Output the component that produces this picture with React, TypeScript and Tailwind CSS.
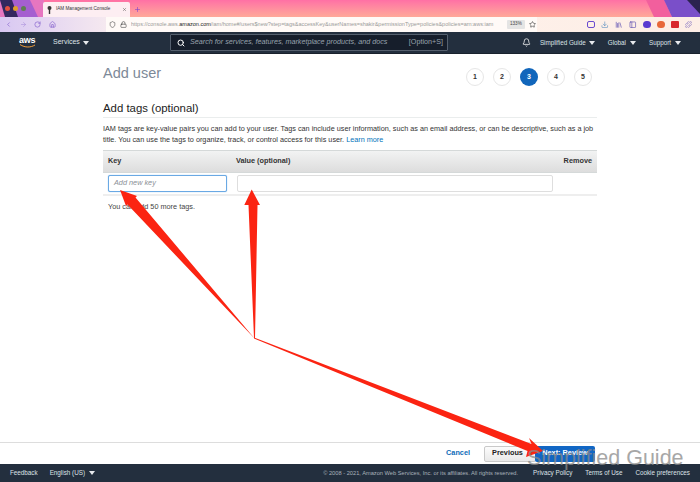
import { ChevronLeft } from "lucide-react";
import { ArrowRight, RotateCw, Home, Shield, Lock, Star, Search, Bell, X, Plus, Puzzle, Download, Library, PanelLeft } from "lucide-react";

const font = "font-['Liberation_Sans','Arial',sans-serif]";
const STEPS = [1, 2, 3, 4, 5];

function Caret({ className = "" }: { className?: string }) {
  return (
    <svg width="6" height="4" viewBox="0 0 6 4" className={className}>
      <path d="M0 0h6L3 4z" fill="#e8eaed" />
    </svg>
  );
}

function Chrome() {
  return (
    <div className="shrink-0">
      <div className="relative h-[17px] bg-gradient-to-b from-[#ff70a5] to-[#ffa898] flex items-end overflow-hidden">
        <svg className="absolute left-0 top-0" width="44" height="17" viewBox="0 0 44 17">
          <path d="M0 0h44v17H0z" fill="#e676c0" />
          <path d="M0 0h30l8 17H7z" fill="#a55fd0" />
          <path d="M0 0h12l6 17H5z" fill="#33285f" />
        </svg>
        <svg className="absolute right-0 top-0" width="54" height="17" viewBox="0 0 54 17">
          <path d="M0 0h18l8 17H8z" fill="#f25f9d" />
          <path d="M18 0h36v17H26z" fill="#7a4fc9" />
          <path d="M41 0h13v14z" fill="#2b2350" />
        </svg>
        <div className="absolute left-[5px] top-[6px] flex gap-[3px]">
          <span className="w-[5px] h-[5px] rounded-full bg-[#e2503f]" />
          <span className="w-[5px] h-[5px] rounded-full bg-[#e0a02c]" />
          <span className="w-[5px] h-[5px] rounded-full bg-[#5f7f52]" />
        </div>
        <div className="relative ml-[43px] h-[15px] w-[87px] bg-[#fdeef2] rounded-t-[2px] flex items-center pl-[4px] pr-[3px] gap-[4px]">
          <svg width="5" height="8" viewBox="0 0 5 8" className="shrink-0">
            <circle cx="2.5" cy="2" r="2" fill="#333" />
            <path d="M1.8 3h1.4v5H1.8z" fill="#333" />
          </svg>
          <span className="text-[4.6px] text-[#333] flex-1 whitespace-nowrap">IAM Management Console</span>
          <X size={5} className="text-[#444]" />
        </div>
        <Plus size={7} className="relative ml-[4px] mb-[4px] text-[#7b3fd0]" />
      </div>
      <div className="relative h-[15px] bg-gradient-to-r from-[#d8c8f2] via-[#fff3ee] via-[20%] to-[#fdeee6] flex items-center">
        <div className="flex items-center gap-[7.5px] pl-[5px] w-[106px] text-[#7b55c9]">
          <ChevronLeft size={7} />
          <ArrowRight size={7} className="opacity-50" />
          <RotateCw size={7} />
          <Home size={7} />
        </div>
        <div className="flex-none w-[431px] h-[15px] bg-[#fffaf7] flex items-center pl-[3px] gap-[4px]">
          <Shield size={7} className="text-[#444]" />
          <Lock size={7} className="text-[#444]" />
          <span className="text-[5.5px] text-[#9a9a9a] whitespace-nowrap w-[372px] overflow-hidden">
            https://console.aws.<span className="text-[#222]">amazon.com</span>/iam/home#/users$new?step=tags&accessKey&userNames=shakir&permissionType=policies&policies=arn:aws:iam
          </span>
          <span className="text-[4.6px] text-[#444] bg-[#e4e4e4] rounded-[1px] px-[3px] py-[1px]">133%</span>
          <Star size={7} className="text-[#333]" />
        </div>
        <div className="flex items-center gap-[6.5px] ml-[50px]">
          <span className="w-[7.5px] h-[7px] rounded-[2px] border border-[#6a4bd0]" />
          <Download size={7.5} className="text-[#5a8fc0]" />
          <Library size={7.5} className="text-[#5a4bb0]" />
          <PanelLeft size={7.5} className="text-[#5a4bb0]" />
          <span className="w-[7.5px] h-[7.5px] rounded-full bg-[#5a3bd0]" />
          <span className="w-[7.5px] h-[7.5px] rounded-full bg-[#e8683a]" />
          <span className="w-[7.5px] h-[7.5px] bg-[#d8282c] rounded-[1px]" />
          <Puzzle size={7} className="text-[#7a6bc0]" />
        </div>
      </div>
    </div>
  );
}

function AwsNav() {
  return (
    <div className="shrink-0 h-[22px] bg-[#232f3e] border-b border-[#19222d] flex items-center text-[#dfe3e8] text-[7px]">
      <div className="w-[53px] pl-[19px] flex flex-col items-start">
        <span className="text-[9px] leading-[7px] font-bold tracking-tight text-white">aws</span>
        <svg width="18" height="4" viewBox="0 0 18 4"><path d="M1 0.5c5 3.5 11 3 15 0.5" stroke="#f29d38" strokeWidth="1" fill="none" /></svg>
      </div>
      <div className="flex items-center gap-[3px] w-[117px]">
        <span>Services</span>
        <Caret />
      </div>
      <div className="w-[278px] h-[17px] bg-[#161e2b] border border-[#55606e] rounded-[1px] flex items-center pl-[6px] pr-[4px] gap-[5px] text-[7.2px]">
        <Search size={8} className="text-white shrink-0" strokeWidth={3} />
        <span className="italic text-[#99a3ad] flex-1 whitespace-nowrap">Search for services, features, marketplace products, and docs</span>
        <span className="text-[#99a3ad]">[Option+S]</span>
      </div>
      <div className="ml-auto flex items-center text-[6.3px]">
        <Bell size={9} className="text-white mr-[9px]" />
        <span className="mr-[3px]">Simplified Guide</span>
        <Caret className="mr-[13px]" />
        <span className="mr-[4px]">Global</span>
        <Caret className="mr-[13px]" />
        <span className="mr-[4px]">Support</span>
        <Caret className="mr-[19px]" />
      </div>
    </div>
  );
}

function Main() {
  return (
    <div className="flex-1 px-[103px] relative">
      <div className="flex items-start justify-between h-[47px]">
        <h1 className="text-[14.5px] leading-[18px] mt-[10px] text-[#7d8998]">Add user</h1>
        <div className="flex gap-[9px] mt-[14px] mr-[5px]">
          {STEPS.map((n) => (
            <span
              key={n}
              className={
                n === 3
                  ? "w-[18px] h-[18px] rounded-full bg-[#1166bb] text-white text-[7px] font-bold flex items-center justify-center"
                  : "w-[18px] h-[18px] rounded-full bg-white border border-[#e6e6e6] text-[#333] text-[7px] font-bold flex items-center justify-center"
              }
            >
              {n}
            </span>
          ))}
        </div>
      </div>
      <h2 className="text-[11.4px] leading-[15px] text-[#222] pb-[1px] border-b border-[#eaeded]">Add tags (optional)</h2>
      <p className="text-[7.27px] leading-[11px] text-[#333] mt-[5px] whitespace-nowrap">
        IAM tags are key-value pairs you can add to your user. Tags can include user information, such as an email address, or can be descriptive, such as a job
        <br />
        title. You can use the tags to organize, track, or control access for this user. <span className="text-[#0073bb]">Learn more</span>
      </p>
      <div className="mt-[5px] h-[23px] bg-gradient-to-b from-[#f2f3f3] to-[#dddddd] border-y border-[#d5d9d9] grid grid-cols-[128px_1fr_auto] items-center pl-[5px] pr-[5px] text-[7.3px] font-bold text-[#333]">
        <span>Key</span>
        <span>Value (optional)</span>
        <span>Remove</span>
      </div>
      <div className="h-[23px] border-b-[2px] border-[#eeeeee] grid grid-cols-[119px_316px] gap-x-[10px] items-center px-[5px]">
        <div className="h-[17px] rounded-[2px] border border-[#6aa9e4] bg-white flex items-center pl-[5px] text-[7.3px] italic text-[#8a8f96] shadow-[0_0_1px_#6aa9e4]">
          Add new key
        </div>
        <div className="h-[17px] rounded-[2px] border border-[#dedede] bg-white" />
      </div>
      <p className="text-[7.3px] text-[#444] mt-[6px] ml-[5px]">You can add 50 more tags.</p>
    </div>
  );
}

function ActionBar() {
  return (
    <div className="shrink-0 h-[22px] border-t border-[#dddddd] flex items-center justify-end pr-[105px] text-[7.3px] font-bold">
      <span className="text-[#0f6cb8] mr-[14px]">Cancel</span>
      <span className="h-[16px] w-[52px] bg-gradient-to-b from-[#fcfcfc] to-[#e9e9e9] border border-[#c9c9c9] rounded-[2px] flex items-center justify-center text-[#222] mr-[-1px] pr-[5px]">
        Previous
      </span>
      <span className="h-[16px] w-[60px] bg-[#1166c4] rounded-[2px] flex items-center justify-center text-white whitespace-nowrap">
        Next: Review
      </span>
    </div>
  );
}

function Footer() {
  return (
    <div className="shrink-0 h-[18px] bg-[#232f3e] flex items-center text-[6.3px] text-[#dfe3e8] pl-[10px] pr-[10px]">
      <span className="mr-[12px]">Feedback</span>
      <span className="mr-[4px]">English (US)</span>
      <Caret />
      <span className="ml-auto text-[#a9b2bb] text-[5.7px] mr-[15px]">© 2008 - 2021, Amazon Web Services, Inc. or its affiliates. All rights reserved.</span>
      <span className="mr-[13px]">Privacy Policy</span>
      <span className="mr-[13px]">Terms of Use</span>
      <span>Cookie preferences</span>
    </div>
  );
}

function Arrows() {
  return (
    <svg className="absolute inset-0 pointer-events-none" width="700" height="482" viewBox="0 0 700 482">
      <g fill="#fb2412">
        {/* to key field */}
        <path d="M120 190 L137 196 L135.5 197.5 L255 339 L127.5 204.5 L126 206z" />
        {/* to value field */}
        <path d="M251.7 189.5 L260 205 L257.5 205 L255 338 L254 338 L248.5 205 L244.3 205z" />
        {/* to next button */}
        <path d="M254 337.5 L531.5 444 L529 438 L543 451 L526 457 L527.5 451 L254 338.5z" />
      </g>
    </svg>
  );
}

export default function App() {
  return (
    <div className={`${font} relative w-[700px] h-[482px] overflow-hidden bg-white flex flex-col`}>
      <Chrome />
      <AwsNav />
      <Main />
      <ActionBar />
      <Footer />
      <Arrows />
      <span className="absolute left-[527px] top-[445px] text-[21.5px] leading-[26px] text-[#8a8a8a] opacity-75 whitespace-nowrap">
        Simplified Guide
      </span>
    </div>
  );
}
